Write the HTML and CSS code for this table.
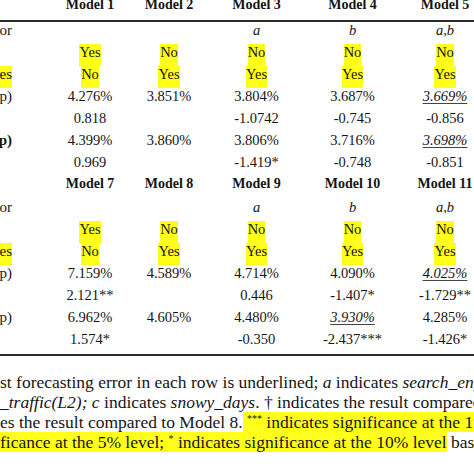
FILE: index.html
```html
<!DOCTYPE html>
<html>
<head>
<meta charset="utf-8">
<link rel="stylesheet" href="styles.css">
</head>
<body>
<div class="page">
  <div class="tbl">
    <div class="row head"><div class="c lbl"></div><div class="c">Model 1</div><div class="c">Model 2</div><div class="c">Model 3</div><div class="c">Model 4</div><div class="c">Model 5</div></div>
    <div class="row"><div class="c lbl">Indoor</div><div class="c"></div><div class="c"></div><div class="c"><i>a</i></div><div class="c"><i>b</i></div><div class="c"><i>a,b</i></div></div>
    <div class="row"><div class="c lbl"></div><div class="c"><span class="hl">Yes</span></div><div class="c"><span class="hl">No</span></div><div class="c"><span class="hl">No</span></div><div class="c"><span class="hl">No</span></div><div class="c"><span class="hl">No</span></div></div>
    <div class="row"><div class="c lbl"><span class="hl">Dummies</span></div><div class="c"><span class="hl">No</span></div><div class="c"><span class="hl">Yes</span></div><div class="c"><span class="hl">Yes</span></div><div class="c"><span class="hl">Yes</span></div><div class="c"><span class="hl">Yes</span></div></div>
    <div class="row"><div class="c lbl">(Step)</div><div class="c">4.276%</div><div class="c">3.851%</div><div class="c">3.804%</div><div class="c">3.687%</div><div class="c"><span class="best">3.669%</span></div></div>
    <div class="row"><div class="c lbl"></div><div class="c">0.818</div><div class="c"></div><div class="c">-1.0742</div><div class="c">-0.745</div><div class="c">-0.856</div></div>
    <div class="row"><div class="c lbl"><b>(Step)</b></div><div class="c">4.399%</div><div class="c">3.860%</div><div class="c">3.806%</div><div class="c">3.716%</div><div class="c"><span class="best">3.698%</span></div></div>
    <div class="row"><div class="c lbl"></div><div class="c">0.969</div><div class="c"></div><div class="c">-1.419*</div><div class="c">-0.748</div><div class="c">-0.851</div></div>

    <div class="row sub"><div class="c lbl"></div><div class="c">Model 7</div><div class="c">Model 8</div><div class="c">Model 9</div><div class="c">Model 10</div><div class="c">Model 11</div></div>
    <div class="row"><div class="c lbl">Indoor</div><div class="c"></div><div class="c"></div><div class="c"><i>a</i></div><div class="c"><i>b</i></div><div class="c"><i>a,b</i></div></div>
    <div class="row"><div class="c lbl"></div><div class="c"><span class="hl">Yes</span></div><div class="c"><span class="hl">No</span></div><div class="c"><span class="hl">No</span></div><div class="c"><span class="hl">No</span></div><div class="c"><span class="hl">No</span></div></div>
    <div class="row"><div class="c lbl"><span class="hl">Dummies</span></div><div class="c"><span class="hl">No</span></div><div class="c"><span class="hl">Yes</span></div><div class="c"><span class="hl">Yes</span></div><div class="c"><span class="hl">Yes</span></div><div class="c"><span class="hl">Yes</span></div></div>
    <div class="row"><div class="c lbl">(Step)</div><div class="c">7.159%</div><div class="c">4.589%</div><div class="c">4.714%</div><div class="c">4.090%</div><div class="c"><span class="best">4.025%</span></div></div>
    <div class="row"><div class="c lbl"></div><div class="c">2.121**</div><div class="c"></div><div class="c">0.446</div><div class="c">-1.407*</div><div class="c">-1.729**</div></div>
    <div class="row"><div class="c lbl">(Step)</div><div class="c">6.962%</div><div class="c">4.605%</div><div class="c">4.480%</div><div class="c"><span class="best">3.930%</span></div><div class="c">4.285%</div></div>
    <div class="row last"><div class="c lbl"></div><div class="c">1.574*</div><div class="c"></div><div class="c">-0.350</div><div class="c">-2.437***</div><div class="c">-1.426*</div></div>
  </div>

  <div class="notes">
    <div class="ln">st forecasting error in each row is underlined; <i>a</i> indicates <i>search_engine</i></div>
    <div class="ln"><i>_traffic(L2); c</i> indicates <i>snowy_days</i>. † indicates the result compared to</div>
    <div class="ln">es the result compared to Model 8.<span class="hl"> <sup>***</sup> indicates significance at the 1% level;</span></div>
    <div class="ln"><span class="hl">ficance at the 5% level; <sup>*</sup> indicates significance at the 10% level</span> based</div>
  </div>
</div>
</body>
</html>
```
FILE: styles.css
```css
html, body {
  margin: 0;
  padding: 0;
  overflow: hidden;
  background: #fff;
}
.page {
  width: 474px;
  height: 474px;
  overflow: hidden;
  font-family: "Liberation Serif", "Times New Roman", serif;
  color: #151515;
}
.tbl {
  width: 480px;
  font-size: 14.5px;
  border-bottom: 2px solid #2a2a2a;
}
.row {
  display: grid;
  grid-template-columns: 60px 60px 98px 77px 115px 70px;
  height: 22.15px;
  line-height: 16px;
}
.row.head {
  height: 19.5px;
  line-height: 9.5px;
  border-bottom: 2px solid #2a2a2a;
  font-weight: bold;
  font-size: 14px;
}
.row.sub {
  font-weight: bold;
  font-size: 14px;
}
.c {
  display: flex;
  justify-content: center;
  white-space: nowrap;
}
.c.lbl {
  justify-content: flex-end;
  padding-right: 48px;
  font-weight: normal;
  font-size: 15px;
}
.hl {
  background: #ffff1a;
}
.best {
  font-style: italic;
  text-decoration: underline;
  text-decoration-color: #444;
  text-underline-offset: 2px;
}
.notes {
  margin-top: 17.8px;
  font-size: 17.5px;
  line-height: 19.7px;
}
.ln {
  white-space: nowrap;
}
sup {
  font-size: 10px;
  line-height: 0;
  vertical-align: 6px;
}
```
